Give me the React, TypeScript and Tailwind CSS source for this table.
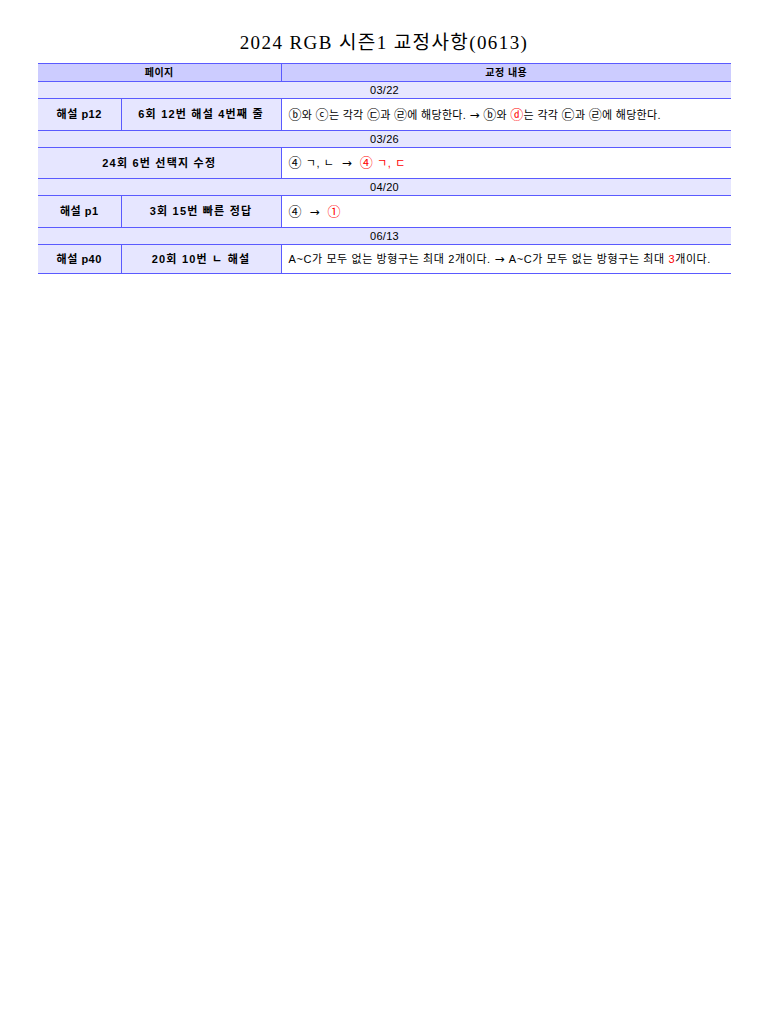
const font = { fontFamily: '"Liberation Sans", "Noto Sans CJK KR", sans-serif' };

function Arrow() {
  return <span style={{ fontFamily: '"DejaVu Sans", sans-serif' }} className="text-[12px]">→</span>;
}

// circled letters render small in Noto, bump them up a bit
function C({ ch, red }: { ch: string; red?: boolean }) {
  return <span className={red ? "text-[13px] leading-none text-[#ff0000]" : "text-[13px] leading-none"}>{ch}</span>;
}

function DateRow({ date }: { date: string }) {
  return (
    <tr className="bg-[#e6e6ff] border-t border-[#5a5aff]">
      <td colSpan={3} className="h-[17px] p-0 text-center text-[11px] leading-none text-black tracking-[0.3px]">
        {date}
      </td>
    </tr>
  );
}

export default function App() {
  return (
    <div className="w-[768px] min-h-[1024px] bg-white" style={font}>
      <h1
        className="pt-[32px] text-center text-[19px] leading-[22px] tracking-[1.4px] text-black"
        style={{ fontFamily: '"Liberation Serif", "Noto Sans CJK KR", serif' }}
      >
        2024 RGB 시즌1 교정사항(0613)
      </h1>

      <table className="ml-[38px] mt-[9px] w-[693px] border-collapse table-fixed text-black">
        <colgroup>
          <col className="w-[83px]" />
          <col className="w-[160px]" />
          <col />
        </colgroup>
        <tbody>
          {/* Header */}
          <tr className="bg-[#ccccff] border-t border-[#5a5aff]">
            <td colSpan={2} className="h-[18px] p-0 text-center text-[10px] font-bold border-r border-[#5a5aff] tracking-[0.5px]">
              페이지
            </td>
            <td className="p-0 text-center text-[10px] font-bold tracking-[0.5px]">교정 내용</td>
          </tr>

          <DateRow date="03/22" />
          <tr className="border-t border-[#5a5aff]">
            <td className="h-[32px] p-0 bg-[#e6e6ff] text-center text-[11px] font-bold border-r border-[#5a5aff] tracking-[0.5px]">해설 p12</td>
            <td className="p-0 bg-[#e6e6ff] text-center text-[11px] font-bold border-r border-[#5a5aff] tracking-[1.2px]">
              6회 12번 해설 4번째 줄
            </td>
            <td className="px-[7px] py-0 bg-white text-[11px] whitespace-nowrap tracking-[0.3px]">
              <C ch="ⓑ" />와 <C ch="ⓒ" />는 각각 <C ch="㉢" />과 <C ch="㉣" />에 해당한다. <Arrow /> <C ch="ⓑ" />와 <C ch="ⓓ" red />는 각각 <C ch="㉢" />과 <C ch="㉣" />에 해당한다.
            </td>
          </tr>

          <DateRow date="03/26" />
          <tr className="border-t border-[#5a5aff]">
            <td colSpan={2} className="h-[31px] p-0 bg-[#e6e6ff] text-center text-[11px] font-bold border-r border-[#5a5aff] tracking-[1.2px]">
              24회 6번 선택지 수정
            </td>
            <td className="px-[7px] py-0 bg-white text-[11px] whitespace-nowrap tracking-[0.6px]">
              <C ch="④" /> ㄱ, ㄴ &nbsp;<Arrow />&nbsp; <C ch="④" red /> <span className="text-[#ff0000]">ㄱ, ㄷ</span>
            </td>
          </tr>

          <DateRow date="04/20" />
          <tr className="border-t border-[#5a5aff]">
            <td className="h-[32px] p-0 bg-[#e6e6ff] text-center text-[11px] font-bold border-r border-[#5a5aff] tracking-[0.5px]">해설 p1</td>
            <td className="p-0 bg-[#e6e6ff] text-center text-[11px] font-bold border-r border-[#5a5aff] tracking-[1.2px]">
              3회 15번 빠른 정답
            </td>
            <td className="px-[7px] py-0 bg-white text-[11px] whitespace-nowrap tracking-[0.6px]">
              <C ch="④" /> &nbsp;<Arrow />&nbsp; <C ch="①" red />
            </td>
          </tr>

          <DateRow date="06/13" />
          <tr className="border-t border-b border-[#5a5aff]">
            <td className="h-[29px] p-0 bg-[#e6e6ff] text-center text-[11px] font-bold border-r border-[#5a5aff] tracking-[0.5px]">해설 p40</td>
            <td className="p-0 bg-[#e6e6ff] text-center text-[11px] font-bold border-r border-[#5a5aff] tracking-[1.2px]">
              20회 10번 ㄴ 해설
            </td>
            <td className="px-[7px] py-0 bg-white text-[11px] whitespace-nowrap tracking-[0.6px]">
              A~C가 모두 없는 방형구는 최대 2개이다. <Arrow /> A~C가 모두 없는 방형구는 최대 <span className="text-[#ff0000]">3</span>개이다.
            </td>
          </tr>
        </tbody>
      </table>
    </div>
  );
}
